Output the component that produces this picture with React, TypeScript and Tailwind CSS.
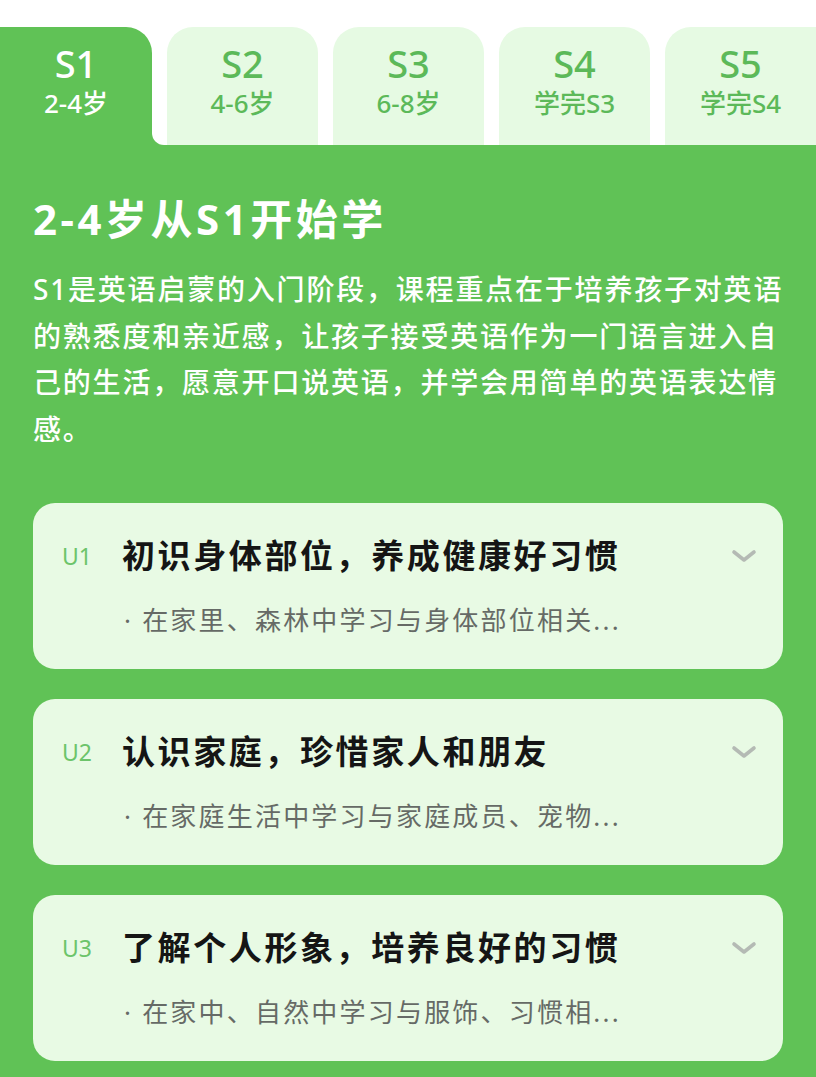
const tabs = [
  { code: 'S1', age: '2-4岁' },
  { code: 'S2', age: '4-6岁' },
  { code: 'S3', age: '6-8岁' },
  { code: 'S4', age: '学完S3' },
  { code: 'S5', age: '学完S4' },
];

const units = [
  { code: 'U1', title: '初识身体部位，养成健康好习惯', desc: '在家里、森林中学习与身体部位相关...' },
  { code: 'U2', title: '认识家庭，珍惜家人和朋友', desc: '在家庭生活中学习与家庭成员、宠物...' },
  { code: 'U3', title: '了解个人形象，培养良好的习惯', desc: '在家中、自然中学习与服饰、习惯相...' },
];

const font = { fontFamily: '"Noto Sans", "Noto Sans CJK SC", sans-serif' };

function Chevron() {
  return (
    <svg width="26" height="14" viewBox="0 0 26 14" fill="none" className="shrink-0">
      <polyline points="3,3 13,11 23,3" stroke="#b4bab4" strokeWidth="3.6" strokeLinecap="round" strokeLinejoin="round" />
    </svg>
  );
}

export default function App() {
  const active = 0;

  return (
    <div className="w-[816px] h-[1077px] bg-white overflow-hidden" style={font}>
      {/* Stage tabs */}
      <div className="relative flex gap-[15px] pt-[27px] overflow-hidden">
        {tabs.map((t, i) => {
          const isActive = i === active;
          const last = i === tabs.length - 1;
          return (
            <div
              key={t.code}
              className={`shrink-0 h-[118px] flex flex-col items-center pt-[13px] ${
                last ? 'w-[170px] pr-[19px] rounded-tl-[26px]' : i === 0 ? 'w-[152px] rounded-tr-[26px]' : 'w-[151px] rounded-t-[26px]'
              } ${isActive ? 'bg-[#60c256] text-white' : 'bg-[#e6fae3] text-[#5cb959]'}`}
            >
              <div className="text-[38px] leading-[46px] font-medium">{t.code}</div>
              <div className="text-[26px] leading-[32px] font-medium mt-[1px]">{t.age}</div>
            </div>
          );
        })}
        {/* concave corner beside active tab */}
        <div className="absolute left-[152px] bottom-0 w-[12px] h-[12px] bg-[#60c256]">
          <div className="w-full h-full bg-white rounded-bl-[12px]" />
        </div>
      </div>

      {/* Green panel */}
      <div className="bg-[#60c256] px-[33px] pt-[47px] pb-[40px] h-full">
        <h1 className="text-white text-[42px] leading-[54px] font-bold tracking-[3.5px]">2-4岁从S1开始学</h1>
        <p className="mt-[20px] w-[756px] text-white text-[28px] leading-[46.5px] font-medium tracking-[1.8px]">
          S1是英语启蒙的入门阶段，课程重点在于培养孩子对英语的熟悉度和亲近感，让孩子接受英语作为一门语言进入自己的生活，愿意开口说英语，并学会用简单的英语表达情感。
        </p>

        <div className="mt-[51px] flex flex-col gap-[30px]">
          {units.map((u) => (
            <div key={u.code} className="w-[750px] h-[166px] rounded-[22px] bg-[#e8fae4] pl-[29px] pr-[26px] pt-[31px]">
              <div className="flex items-center">
                <span className="w-[60px] text-[23px] leading-[44px] text-[#6cc46a]">{u.code}</span>
                <span className="flex-1 text-[33px] leading-[44px] font-bold tracking-[2.6px] text-[#151515]">{u.title}</span>
                <Chevron />
              </div>
              <div className="mt-[25px] pl-[62px] text-[26px] leading-[34px] tracking-[2.2px] text-[#666a66]">
                · {u.desc}
              </div>
            </div>
          ))}
        </div>
      </div>
    </div>
  );
}
